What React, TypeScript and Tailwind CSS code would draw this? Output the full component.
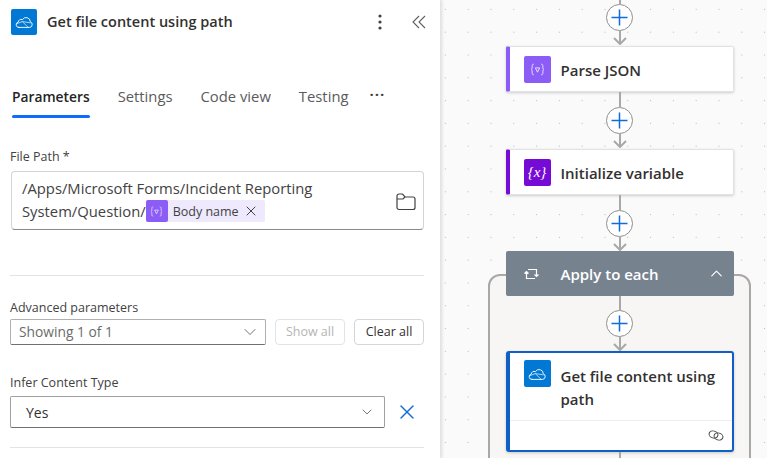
import React from "react";
import { ChevronDown, ChevronUp, X } from "lucide-react";

const Cloud = ({ s = 20 }: { s?: number }) => (
  <svg width={s} height={s} viewBox="0 0 24 24" fill="none" stroke="white" strokeWidth="1.1" strokeLinejoin="round" strokeLinecap="round">
    <path d="M6 18.5h12.5a3.5 3.5 0 0 0 1-6.8 5 5 0 0 0-9.3-2.6A4.2 4.2 0 0 0 5 12.2a3.2 3.2 0 0 0 1 6.3Z" />
    <path d="M3.5 14 10 11.5l9.5 1.5M10 11.5l7 7" strokeWidth="0.8" />
  </svg>
);

const Braces = ({ s = 14, stroke = "white" }: { s?: number; stroke?: string }) => (
  <svg width={s} height={s} viewBox="0 0 14 14" fill="none" stroke={stroke} strokeWidth="0.9">
    <path d="M3.5 2C2 2 2 3 2 4.5S2 6.5 1 7c1 .5 1 1 1 2.5S2 12 3.5 12M10.5 2C12 2 12 3 12 4.5S12 6.5 13 7c-1 .5-1 1-1 2.5s0 2.5-1.500 2.500" />
    <path d="M5 5.500h4L7 9.500Z" />
  </svg>
);

const Connector = ({ h = 57, top = 15 }: { h?: number; top?: number }) => (
  <div className="flex flex-col items-center shrink-0" style={{ height: h }}>
    <div className="w-[2px] bg-[#a8a8a8]" style={{ height: top }} />
    <div className="w-[27px] h-[27px] shrink-0 rounded-full border border-[#8f8f8f] bg-white flex items-center justify-center">
      <svg width="17" height="17" viewBox="0 0 17 17" stroke="#0f6cdd" strokeWidth="1.5">
        <path d="M8.5 0.500v16M0.500 8.500h16" />
      </svg>
    </div>
    <svg width="14" height="14" viewBox="0 0 14 14" fill="none" stroke="#a8a8a8" strokeWidth="2" className="shrink-0">
      <path d="M7 0v12.500M1 7l6 6 6-6" />
    </svg>
  </div>
);

const Card = ({ color, icon, iconBg, title }: { color: string; icon: React.ReactNode; iconBg: string; title: string }) => (
  <div className="w-[228px] h-[46px] bg-white border-y border-r border-[#e2e2e2] rounded-[2px] shadow-[0_1px_3px_rgba(0,0,0,0.18)] flex items-center overflow-hidden" style={{ borderLeft: `4px solid ${color}` }}>
    <div className="w-[27px] h-[27px] ml-[14px] rounded-[2px] flex items-center justify-center text-white" style={{ background: iconBg }}>{icon}</div>
    <span className="ml-[10px] pt-[2px] text-[15px] font-semibold text-[#323130]">{title}</span>
  </div>
);

const Tab = ({ children, active }: { children: string; active?: boolean }) => (
  <div className={active ? "relative text-[13.8px] leading-[24px] font-semibold text-[#242424] h-[36px] pt-[3px]" : "text-[14.8px] leading-[24px] text-[#5b5b5b] h-[36px] pt-[2px]"}>
    {children}
    {active && <div className="absolute left-0 right-0 bottom-0 h-[3px] rounded-full bg-[#0f6cfd]" />}
  </div>
);

export default function App() {
  return (
    <div className="flex w-[767px] h-[458px] overflow-hidden bg-white text-[#323130] font-['Open_Sans','Noto_Sans',sans-serif]">
      <div className="w-[441px] shrink-0 h-full bg-white border-r border-[#e4e4e4] shadow-[1px_0_3px_rgba(0,0,0,0.12)] z-10 px-[10px] pt-[9px]">
        <div className="flex items-center h-[26px]">
          <div className="w-[26px] h-[26px] ml-px bg-[#0078d4] rounded-[2px] flex items-center justify-center"><Cloud /></div>
          <span className="ml-[10px] text-[14.5px] font-semibold text-[#323130]">Get file content using path</span>
          <svg className="ml-auto" width="4" height="16" viewBox="0 0 4 16" fill="#424242">
            <circle cx="2" cy="2" r="1.6" /><circle cx="2" cy="8" r="1.6" /><circle cx="2" cy="14" r="1.600" />
          </svg>
          <svg className="ml-[30px] mr-[4px]" width="14" height="14" viewBox="0 0 14 14" fill="none" stroke="#5f5f5f" strokeWidth="1.1">
            <path d="M7 1 1 7l6 6M13 1 7 7l6 6" />
          </svg>
        </div>
        <div className="flex items-start gap-[28px] mt-[47px] ml-[2px] h-[36px]">
          <Tab active>Parameters</Tab>
          <Tab>Settings</Tab>
          <Tab>Code view</Tab>
          <Tab>Testing</Tab>
          <div className="-ml-[7px] mt-[1px] text-[15px] font-bold text-[#424242] tracking-[1px]">···</div>
        </div>
        <div className="mt-[30px] text-[12.5px] leading-[18px] text-[#424242]">File Path *</div>
        <div className="ml-px mt-[5px] w-[413px] h-[59px] border border-[#d4d4d4] border-b-[#8a8a8a] rounded-[4px] pl-[10px] pt-[5px] flex">
          <div className="w-[350px] text-[14.8px] leading-[23px] text-[#424242]">
            <div className="whitespace-nowrap">/Apps/Microsoft Forms/Incident Reporting</div>
            <div className="flex items-center whitespace-nowrap">
              <span>System/Question/</span>
              <span className="inline-flex items-center h-[22px] bg-[#eee9fc] rounded-[2px] -mt-[1px]">
                <span className="w-[22px] h-[22px] bg-[#8b5cf6] rounded-[2px] flex items-center justify-center"><Braces s={13} stroke="#e4dbff" /></span>
                <span className="ml-[5px] text-[12.5px] text-[#424242]">Body name</span>
                <X className="ml-[4px] mr-[6px] text-[#424242]" size={16} strokeWidth={1.5} />
              </span>
            </div>
          </div>
          <svg className="ml-auto mr-[7px] mt-[16px]" width="20" height="18" viewBox="0 0 20 18" fill="none" stroke="#424242" strokeWidth="1.2">
            <path d="M1 14.500V3a2 2 0 0 1 2-2h3.500l2.500 3h8a2 2 0 0 1 2 2v8.500a2 2 0 0 1-2 2H3a2 2 0 0 1-2-2Z" />
            <path d="M1 6h6l2-2" />
          </svg>
        </div>
        <div className="mt-[45px] h-px w-[414px] bg-[#e3e3e3]" />
        <div className="mt-[23px] text-[12.5px] leading-[18px] text-[#424242]">Advanced parameters</div>
        <div className="flex mt-[2px] h-[26px] w-[414px]">
          <div className="w-[256px] border border-[#b0b0b0] border-b-[#707070] rounded-[2px] flex items-center pl-[8px] text-[13.8px] text-[#6b6b6b]">
            Showing 1 of 1
            <ChevronDown className="ml-auto mr-[5px] text-[#555]" size={20} strokeWidth={1} />
          </div>
          <div className="ml-[9px] w-[70px] border border-[#e3e3e3] rounded-[4px] flex items-center justify-center text-[12.5px] text-[#b5b5b5]">Show all</div>
          <div className="ml-[9px] w-[70px] border border-[#d6d6d6] rounded-[4px] flex items-center justify-center text-[12.5px] text-[#323130]">Clear all</div>
        </div>
        <div className="mt-[29px] text-[12.5px] leading-[18px] text-[#424242]">Infer Content Type</div>
        <div className="flex items-center mt-[4px] h-[32px]">
          <div className="w-[375px] h-[32px] border border-[#a0a0a0] border-b-[#707070] rounded-[2px] flex items-center pl-[15px] text-[14px] text-[#323130]">
            Yes
            <ChevronDown className="ml-auto mr-[9px] text-[#555]" size={16} strokeWidth={1.2} />
          </div>
          <X className="ml-[10px] text-[#0f6cdd]" size={24} strokeWidth={1.4} />
        </div>
        <div className="mt-[19px] h-px w-[414px] bg-[#e3e3e3]" />
      </div>

      <div className="flex-1 h-full overflow-hidden bg-[#fafafa] bg-[radial-gradient(#bdbdbd_0.7px,transparent_1px)] bg-[size:22.8px_22.8px] bg-[position:-7px_-2px]">
        <div className="w-[263px] ml-[47px] flex flex-col items-center -mt-[11px]">
          <Connector />
          <Card color="#8b5cf6" iconBg="#8b5cf6" title="Parse JSON" icon={<Braces s={15} stroke="#e9e2ff" />} />
          <Connector />
          <Card color="#770bd6" iconBg="#770bd6" title="Initialize variable" icon={<span className="text-[15px] italic font-['Liberation_Serif',serif]">{"{x}"}</span>} />
          <Connector h={56} />
          <div className="w-full flex flex-col items-center">
            <div className="relative z-10 w-[228px] h-[45px] rounded-[2px] bg-[#76838f] flex items-center text-white">
              <svg className="ml-[18px]" width="15" height="12" viewBox="0 0 15 12" fill="none" stroke="white" strokeWidth="1.200">
                <path d="M4 1.500h8.500V8M10.500 6.500l2 2 2-2M11 10.500H2.500V4M0.500 5.500l2-2 2 2" />
              </svg>
              <span className="ml-[22px] pt-[2px] text-[15px] font-semibold">Apply to each</span>
              <ChevronUp className="ml-auto mr-[8px]" size={19} strokeWidth={1.4} />
            </div>
            <div className="-mt-[22px] w-full h-[220px] border-2 border-[#a8a8a8] rounded-[12px] bg-[#f7f6f5] pt-[20px] flex flex-col items-center">
              <Connector h={55} top={14} />
              <div className="w-[228px] h-[101px] bg-white border-2 border-l-[4px] border-[#0f5fc4] rounded-[3px] shadow-[0_1px_3px_rgba(0,0,0,0.18)] flex flex-col">
                <div className="flex h-[68px] pl-[14px] pt-[7px] border-b border-[#eeeeee]">
                  <div className="w-[27px] h-[27px] shrink-0 bg-[#0078d4] rounded-[2px] flex items-center justify-center"><Cloud /></div>
                  <span className="ml-[10px] pt-[5px] text-[15px] leading-[23px] font-semibold text-[#323130]">Get file content using path</span>
                </div>
                <div className="flex-1 flex items-center justify-end pr-[8px]">
                  <svg width="16" height="11" viewBox="0 0 16 11" fill="none" stroke="#424242" strokeWidth="1">
                    <ellipse cx="5.500" cy="4.500" rx="4.500" ry="3.500" transform="rotate(15 5.500 4.500)" />
                    <ellipse cx="10.500" cy="6.500" rx="4.500" ry="3.500" transform="rotate(15 10.500 6.500)" />
                  </svg>
                </div>
              </div>
              <div className="w-[2px] h-[20px] bg-[#a8a8a8]" />
            </div>
          </div>
        </div>
      </div>
    </div>
  );
}
